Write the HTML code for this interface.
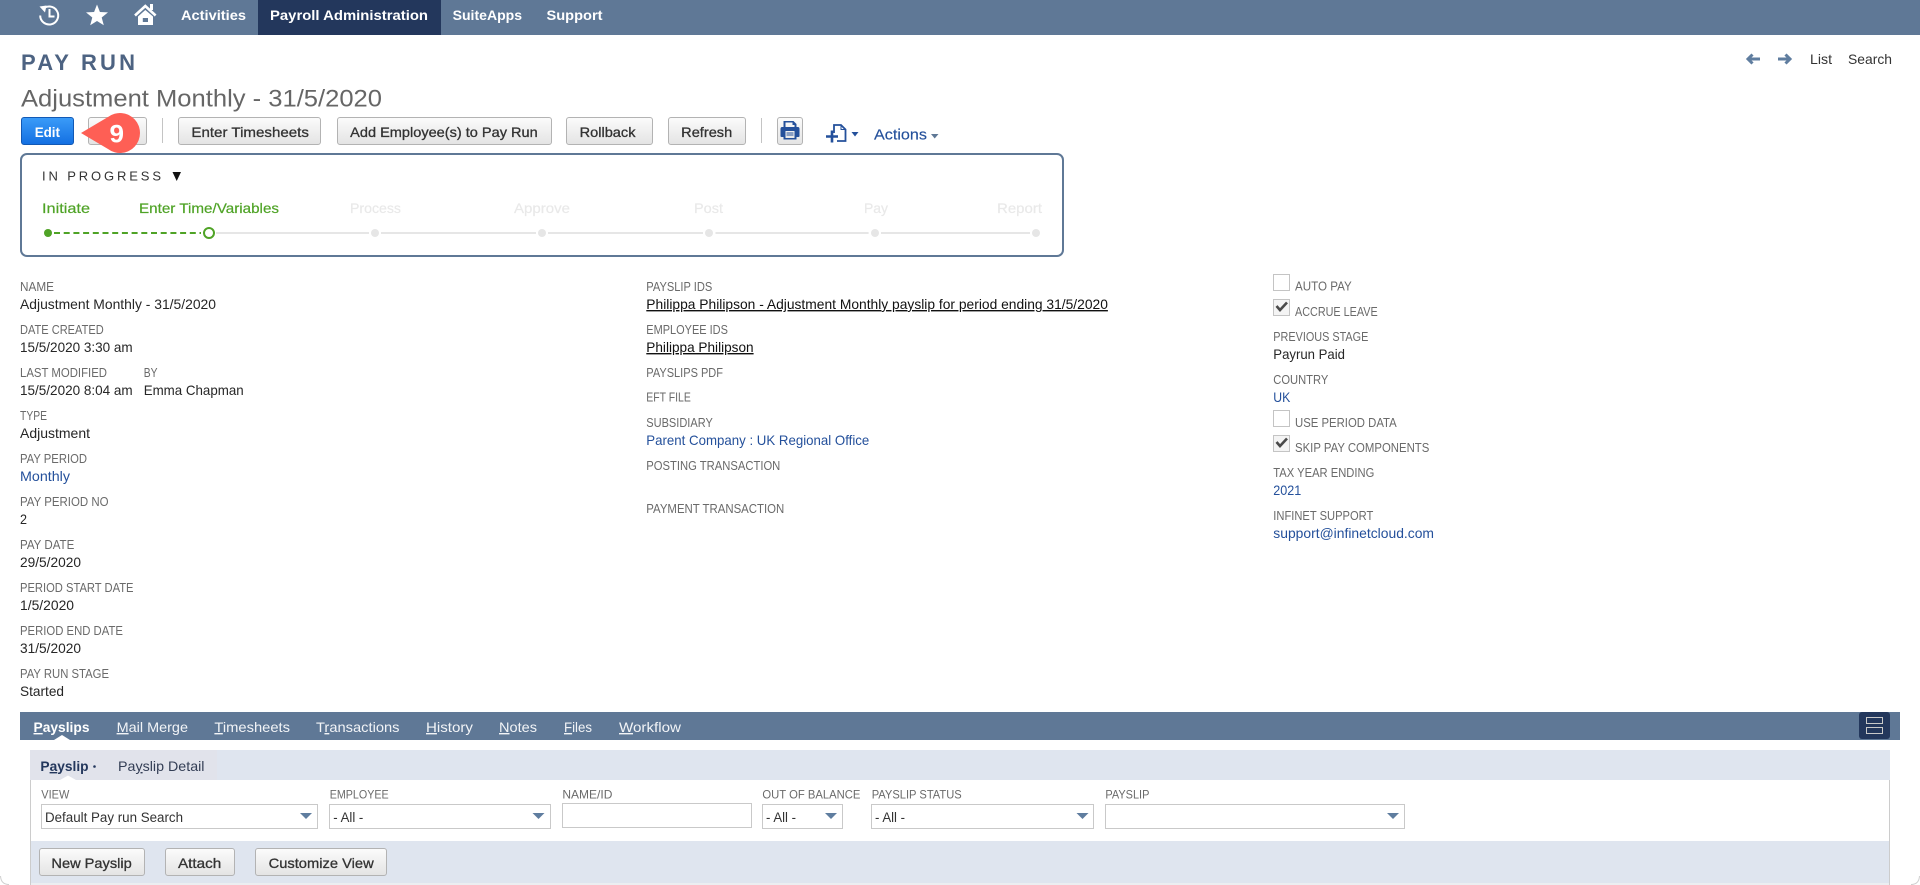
<!DOCTYPE html>
<html lang="en">
<head>
<meta charset="utf-8">
<title>Pay Run - Adjustment Monthly</title>
<style>
html,body{margin:0;padding:0;width:1920px;height:885px;overflow:hidden;background:#fff;font-family:"Liberation Sans",sans-serif}
.a{position:absolute;box-sizing:border-box}
.btn{background:linear-gradient(#fbfbfb,#e4e4e4);border:1px solid #b3b3b3;border-radius:3px}
.sel{background:#fff;border:1px solid #c9c9c9}
svg{position:absolute;left:0;top:0}
text{font-family:"Liberation Sans",sans-serif;white-space:pre}
.l{font-size:12.5px;fill:#6a6a6a}
.v{font-size:14px;fill:#262626}
.k{font-size:14px;fill:#24509b}
.n{font-size:14px;font-weight:bold;fill:#fff}
.b{font-size:14px;fill:#333;stroke:#333;stroke-width:.3px}
.s{font-size:14px;fill:#4fa326;stroke:#4fa326;stroke-width:.2px}
.g{font-size:14px;fill:#e9e9e9;stroke:#e9e9e9;stroke-width:.2px}
.t{font-size:14px;fill:#f2f4f7}
.f{font-size:12px;fill:#6a6a6a}
.o{font-size:13.5px;fill:#333}
</style>
</head>
<body>
<div class="a" style="left:0;top:0;width:1920px;height:35px;background:#5f7896"></div>
<div class="a" style="left:258px;top:0;width:183px;height:35px;background:#23375c"></div>

<div class="a" style="left:21px;top:117px;width:53px;height:28px;background:linear-gradient(#3a9bf8,#1470e2);border:1px solid #1259b5;border-radius:3px"></div>
<div class="a btn" style="left:88px;top:117px;width:59px;height:28px"></div>
<div class="a" style="left:162px;top:118px;width:1px;height:25px;background:#c4c4c4"></div>
<div class="a btn" style="left:178px;top:117px;width:143px;height:28px"></div>
<div class="a btn" style="left:337px;top:117px;width:215px;height:28px"></div>
<div class="a btn" style="left:566px;top:117px;width:87px;height:28px"></div>
<div class="a btn" style="left:668px;top:117px;width:78px;height:28px"></div>
<div class="a" style="left:761px;top:118px;width:1px;height:25px;background:#c4c4c4"></div>
<div class="a btn" style="left:777px;top:117px;width:26px;height:28px"></div>

<div class="a" style="left:20px;top:153px;width:1044px;height:104px;border:2px solid #5f7896;border-radius:7px;background:#fff"></div>

<div class="a" style="left:20px;top:712px;width:1880px;height:28px;background:#5f7896"></div>
<div class="a" style="left:1859px;top:712px;width:31px;height:27px;background:#23375c;border-radius:3px"></div>
<div class="a" style="left:1866px;top:717px;width:17px;height:7px;border:1px solid #c9c9c9"></div>
<div class="a" style="left:1866px;top:727px;width:17px;height:7px;border:1px solid #c9c9c9"></div>

<div class="a" style="left:30px;top:750px;width:1860px;height:30px;background:#dfe5ef"></div>
<div class="a" style="left:30px;top:750px;width:187px;height:30px;background:#e1e3eb"></div>
<div class="a" style="left:30px;top:780px;width:1860px;height:105px;background:#fff;border-left:1px solid #ccc;border-right:1px solid #ccc"></div>
<div class="a" style="left:31px;top:841px;width:1858px;height:42px;background:#dfe5ef"></div>
<div class="a" style="left:31px;top:883px;width:1858px;height:2px;background:#eceef1"></div>

<div class="a sel" style="left:41px;top:804px;width:277px;height:25px"></div>
<div class="a sel" style="left:329px;top:804px;width:222px;height:25px"></div>
<div class="a sel" style="left:562px;top:803px;width:190px;height:25px"></div>
<div class="a sel" style="left:762px;top:804px;width:81px;height:25px"></div>
<div class="a sel" style="left:871px;top:804px;width:223px;height:25px"></div>
<div class="a sel" style="left:1105px;top:804px;width:300px;height:25px"></div>

<div class="a btn" style="left:39px;top:848px;width:106px;height:28px"></div>
<div class="a btn" style="left:165px;top:848px;width:70px;height:28px"></div>
<div class="a btn" style="left:255px;top:848px;width:132px;height:28px"></div>

<div class="a" style="left:1273px;top:274px;width:17px;height:17px;border:1px solid #c4c4c4;background:#fff"></div>
<div class="a" style="left:1273px;top:299px;width:17px;height:17px;border:1px solid #c4c4c4;background:#f4f4f4"></div>
<div class="a" style="left:1273px;top:410px;width:17px;height:17px;border:1px solid #c4c4c4;background:#fff"></div>
<div class="a" style="left:1273px;top:435px;width:17px;height:17px;border:1px solid #c4c4c4;background:#f4f4f4"></div>

<svg width="1920" height="885" viewBox="0 0 1920 885" xmlns="http://www.w3.org/2000/svg">
<!-- nav icons -->
<path d="M42.5 9.5 A9 9 0 1 1 40.2 15.5" fill="none" stroke="#fff" stroke-width="2"/>
<path d="M39.5 6.5 L46.5 5.5 L45 12.5 Z" fill="#fff"/>
<path d="M49.5 9 V16.5 H54.5" fill="none" stroke="#fff" stroke-width="2"/>
<polygon points="97,4.5 99.9,12 108,12.4 101.7,17.5 103.8,25.3 97,21 90.2,25.3 92.3,17.5 86,12.4 94.1,12" fill="#fff"/>
<path d="M135 15.5 L145.3 6 L155.6 15.5" fill="none" stroke="#fff" stroke-width="2.6"/>
<rect x="150" y="4" width="3" height="6" fill="#fff"/>
<path fill-rule="evenodd" d="M145.3 10 L153 16.5 V25 H138 V16.5 Z M142.8 18 V22 H148 V18 Z" fill="#fff"/>
<text class="n" x="181" y="20" textLength="65" lengthAdjust="spacingAndGlyphs">Activities</text>
<text class="n" x="270" y="20" textLength="158" lengthAdjust="spacingAndGlyphs">Payroll Administration</text>
<text class="n" x="452.6" y="20" textLength="69.5" lengthAdjust="spacingAndGlyphs">SuiteApps</text>
<text class="n" x="546.5" y="20" textLength="56" lengthAdjust="spacingAndGlyphs">Support</text>

<!-- header -->
<text x="21" y="70" textLength="114" lengthAdjust="spacing" style="font-size:22px;font-weight:bold;fill:#4d6382">PAY RUN</text>
<text x="21" y="106.5" textLength="361" lengthAdjust="spacingAndGlyphs" style="font-size:24px;fill:#666">Adjustment Monthly - 31/5/2020</text>
<path d="M1760 59 H1749 M1752.5 54.5 L1748 59 L1752.5 63.5" fill="none" stroke="#5f7d9f" stroke-width="3"/>
<path d="M1778 59 H1789 M1785.5 54.5 L1790 59 L1785.5 63.5" fill="none" stroke="#5f7d9f" stroke-width="3"/>
<text class="o" x="1810" y="64" textLength="22" lengthAdjust="spacingAndGlyphs" style="font-size:14px">List</text>
<text class="o" x="1848" y="64" textLength="44" lengthAdjust="spacingAndGlyphs" style="font-size:14px">Search</text>

<!-- toolbar -->
<text x="34.7" y="137" textLength="25.3" lengthAdjust="spacingAndGlyphs" style="font-size:14px;font-weight:bold;fill:#fff">Edit</text>
<text class="b" x="191.4" y="137" textLength="117.5" lengthAdjust="spacingAndGlyphs">Enter Timesheets</text>
<text class="b" x="350.2" y="137" textLength="187.5" lengthAdjust="spacingAndGlyphs">Add Employee(s) to Pay Run</text>
<text class="b" x="579.6" y="137" textLength="55.9" lengthAdjust="spacingAndGlyphs">Rollback</text>
<text class="b" x="681.2" y="137" textLength="51" lengthAdjust="spacingAndGlyphs">Refresh</text>
<!-- printer -->
<path fill-rule="evenodd" d="M783.5 121 H793.5 L796.5 124 V127 H798 Q799.5 127 799.5 129 V136 Q799.5 137 798 137 H796.5 V139.5 H783.5 V137 H782 Q780.5 137 780.5 136 V129 Q780.5 127 782 127 H783.5 Z M785.5 122.5 V127 H794.5 V125 H792.5 V122.5 Z M785.5 131 V138 H794.5 V131 Z" fill="#24509b"/>
<path d="M786.5 133 H793.5 M786.5 135 H793.5" stroke="#24509b" stroke-width="1"/>
<!-- new doc -->
<path d="M834 133 V125 H841 L845.5 129.5 V141 H837" fill="none" stroke="#24509b" stroke-width="1.8"/>
<path d="M841 125 V129.5 H845.5" fill="none" stroke="#24509b" stroke-width="1"/>
<path d="M826 136.5 H838 M832 130.5 V142.5" stroke="#24509b" stroke-width="2.6"/>
<polygon points="851.5,132 858.5,132 855,136.5" fill="#24509b"/>
<text x="874" y="139.5" textLength="53" lengthAdjust="spacingAndGlyphs" style="font-size:15px;fill:#24509b;stroke:#24509b;stroke-width:.15px">Actions</text>
<polygon points="931,134 938.5,134 934.7,138.5" fill="#5f7896"/>

<!-- badge -->
<path d="M81 133 L108 117 A20 20 0 1 1 108 149 Z" fill="#fe5f55"/>
<text x="109.5" y="142.5" textLength="14.5" lengthAdjust="spacingAndGlyphs" style="font-size:25px;font-weight:bold;fill:#fff">9</text>

<!-- progress -->
<text x="42" y="180.5" textLength="119" lengthAdjust="spacing" style="font-size:13px;fill:#333">IN PROGRESS</text>
<polygon points="172.5,172 181,172 176.7,181" fill="#111"/>
<text class="s" x="42" y="213" textLength="48" lengthAdjust="spacingAndGlyphs">Initiate</text>
<text class="s" x="139" y="213" textLength="140" lengthAdjust="spacingAndGlyphs">Enter Time/Variables</text>
<text class="g" x="350" y="213" textLength="51" lengthAdjust="spacingAndGlyphs">Process</text>
<text class="g" x="514" y="213" textLength="56" lengthAdjust="spacingAndGlyphs">Approve</text>
<text class="g" x="694" y="213" textLength="29" lengthAdjust="spacingAndGlyphs">Post</text>
<text class="g" x="864" y="213" textLength="24" lengthAdjust="spacingAndGlyphs">Pay</text>
<text class="g" x="997" y="213" textLength="45" lengthAdjust="spacingAndGlyphs">Report</text>
<circle cx="48" cy="233" r="4" fill="#4fa326"/>
<path d="M54 233 H201" stroke="#4fa326" stroke-width="2" stroke-dasharray="6 3.7"/>
<circle cx="209" cy="233" r="5" fill="#fff" stroke="#4fa326" stroke-width="2"/>
<path d="M216 233 H369 M381 233 H536 M548 233 H703 M715.5 233 H868.6 M881 233 H1030" stroke="#e6e6e6" stroke-width="2"/>
<g fill="#e6e6e6"><circle cx="375" cy="233" r="4"/><circle cx="542" cy="233" r="4"/><circle cx="709" cy="233" r="4"/><circle cx="875" cy="233" r="4"/><circle cx="1036" cy="233" r="4"/></g>

<!-- column 1 -->
<text class="l" x="20" y="291" textLength="34" lengthAdjust="spacingAndGlyphs">NAME</text>
<text class="v" x="20" y="309" textLength="196" lengthAdjust="spacingAndGlyphs">Adjustment Monthly - 31/5/2020</text>
<text class="l" x="20" y="334" textLength="83.7" lengthAdjust="spacingAndGlyphs">DATE CREATED</text>
<text class="v" x="20" y="352" textLength="112.7" lengthAdjust="spacingAndGlyphs">15/5/2020 3:30 am</text>
<text class="l" x="20" y="377" textLength="87" lengthAdjust="spacingAndGlyphs">LAST MODIFIED</text>
<text class="l" x="143.7" y="377" textLength="13.8" lengthAdjust="spacingAndGlyphs">BY</text>
<text class="v" x="20" y="395" textLength="112.7" lengthAdjust="spacingAndGlyphs">15/5/2020 8:04 am</text>
<text class="v" x="143.7" y="395" textLength="100" lengthAdjust="spacingAndGlyphs">Emma Chapman</text>
<text class="l" x="20" y="420" textLength="27" lengthAdjust="spacingAndGlyphs">TYPE</text>
<text class="v" x="20" y="438" textLength="70" lengthAdjust="spacingAndGlyphs">Adjustment</text>
<text class="l" x="20" y="463" textLength="67" lengthAdjust="spacingAndGlyphs">PAY PERIOD</text>
<text class="k" x="20" y="481" textLength="50" lengthAdjust="spacingAndGlyphs">Monthly</text>
<text class="l" x="20" y="506" textLength="88.6" lengthAdjust="spacingAndGlyphs">PAY PERIOD NO</text>
<text class="v" x="20" y="524" textLength="7" lengthAdjust="spacingAndGlyphs">2</text>
<text class="l" x="20" y="549" textLength="54.3" lengthAdjust="spacingAndGlyphs">PAY DATE</text>
<text class="v" x="20" y="567" textLength="61" lengthAdjust="spacingAndGlyphs">29/5/2020</text>
<text class="l" x="20" y="592" textLength="113.5" lengthAdjust="spacingAndGlyphs">PERIOD START DATE</text>
<text class="v" x="20" y="610" textLength="54" lengthAdjust="spacingAndGlyphs">1/5/2020</text>
<text class="l" x="20" y="635" textLength="102.9" lengthAdjust="spacingAndGlyphs">PERIOD END DATE</text>
<text class="v" x="20" y="653" textLength="61" lengthAdjust="spacingAndGlyphs">31/5/2020</text>
<text class="l" x="20" y="678" textLength="89" lengthAdjust="spacingAndGlyphs">PAY RUN STAGE</text>
<text class="v" x="20" y="696" textLength="44" lengthAdjust="spacingAndGlyphs">Started</text>

<!-- column 2 -->
<text class="l" x="646.3" y="291" textLength="66" lengthAdjust="spacingAndGlyphs">PAYSLIP IDS</text>
<text class="v" x="646.3" y="309" textLength="461.6" lengthAdjust="spacingAndGlyphs" style="fill:#111;text-decoration:underline">Philippa Philipson - Adjustment Monthly payslip for period ending 31/5/2020</text>
<text class="l" x="646.3" y="334" textLength="81.6" lengthAdjust="spacingAndGlyphs">EMPLOYEE IDS</text>
<text class="v" x="646.3" y="352" textLength="107.3" lengthAdjust="spacingAndGlyphs" style="fill:#111;text-decoration:underline">Philippa Philipson</text>
<text class="l" x="646.3" y="377" textLength="76.7" lengthAdjust="spacingAndGlyphs">PAYSLIPS PDF</text>
<text class="l" x="646.3" y="401.5" textLength="44.5" lengthAdjust="spacingAndGlyphs">EFT FILE</text>
<text class="l" x="646.3" y="427" textLength="66.5" lengthAdjust="spacingAndGlyphs">SUBSIDIARY</text>
<text class="k" x="646.3" y="445" textLength="223" lengthAdjust="spacingAndGlyphs">Parent Company : UK Regional Office</text>
<text class="l" x="646.3" y="470" textLength="134" lengthAdjust="spacingAndGlyphs">POSTING TRANSACTION</text>
<text class="l" x="646.3" y="513" textLength="138" lengthAdjust="spacingAndGlyphs">PAYMENT TRANSACTION</text>

<!-- column 3 -->
<text class="l" x="1295" y="290.5" textLength="56.7" lengthAdjust="spacingAndGlyphs">AUTO PAY</text>
<path d="M1276.5 306 L1280 310 L1287 302.5" fill="none" stroke="#4a4a4a" stroke-width="2.6"/>
<text class="l" x="1295" y="316" textLength="82.7" lengthAdjust="spacingAndGlyphs">ACCRUE LEAVE</text>
<text class="l" x="1273.3" y="341" textLength="95" lengthAdjust="spacingAndGlyphs">PREVIOUS STAGE</text>
<text class="v" x="1273.3" y="359" textLength="71.7" lengthAdjust="spacingAndGlyphs">Payrun Paid</text>
<text class="l" x="1273.3" y="384" textLength="55" lengthAdjust="spacingAndGlyphs">COUNTRY</text>
<text class="k" x="1273.3" y="402" textLength="17" lengthAdjust="spacingAndGlyphs">UK</text>
<text class="l" x="1295" y="427" textLength="101.7" lengthAdjust="spacingAndGlyphs">USE PERIOD DATA</text>
<path d="M1276.5 442 L1280 446 L1287 438.5" fill="none" stroke="#4a4a4a" stroke-width="2.6"/>
<text class="l" x="1295" y="452" textLength="134.3" lengthAdjust="spacingAndGlyphs">SKIP PAY COMPONENTS</text>
<text class="l" x="1273.3" y="477" textLength="101" lengthAdjust="spacingAndGlyphs">TAX YEAR ENDING</text>
<text class="k" x="1273.3" y="495" textLength="28" lengthAdjust="spacingAndGlyphs">2021</text>
<text class="l" x="1273.3" y="520" textLength="100" lengthAdjust="spacingAndGlyphs">INFINET SUPPORT</text>
<text class="k" x="1273.3" y="538" textLength="160.7" lengthAdjust="spacingAndGlyphs">support@infinetcloud.com</text>

<!-- tabs -->
<text class="t" x="33.5" y="732" textLength="56" lengthAdjust="spacingAndGlyphs" style="font-weight:bold;fill:#fff"><tspan text-decoration="underline">P</tspan>ayslips</text>
<text class="t" x="116.6" y="732" textLength="71.4" lengthAdjust="spacingAndGlyphs"><tspan text-decoration="underline">M</tspan>ail Merge</text>
<text class="t" x="214.4" y="732" textLength="75.6" lengthAdjust="spacingAndGlyphs"><tspan text-decoration="underline">T</tspan>imesheets</text>
<text class="t" x="316" y="732" textLength="83.5" lengthAdjust="spacingAndGlyphs">T<tspan text-decoration="underline">r</tspan>ansactions</text>
<text class="t" x="426" y="732" textLength="47" lengthAdjust="spacingAndGlyphs"><tspan text-decoration="underline">H</tspan>istory</text>
<text class="t" x="499" y="732" textLength="38" lengthAdjust="spacingAndGlyphs"><tspan text-decoration="underline">N</tspan>otes</text>
<text class="t" x="564" y="732" textLength="28" lengthAdjust="spacingAndGlyphs"><tspan text-decoration="underline">F</tspan>iles</text>
<text class="t" x="619" y="732" textLength="62" lengthAdjust="spacingAndGlyphs"><tspan text-decoration="underline">W</tspan>orkflow</text>
<polygon points="54,740 62,735 70,740" fill="#fff"/>

<!-- subtabs -->
<text x="40.4" y="771" textLength="48.2" lengthAdjust="spacingAndGlyphs" style="font-size:14px;font-weight:bold;fill:#23375c">P<tspan text-decoration="underline">a</tspan>yslip</text>
<circle cx="94.5" cy="766.5" r="1.3" fill="#23375c"/>
<text x="118" y="771" textLength="86.5" lengthAdjust="spacingAndGlyphs" style="font-size:14px;fill:#333e55">Pa<tspan text-decoration="underline">y</tspan>slip Detail</text>
<polygon points="60,780 68,775.5 76,780" fill="#fff"/>

<!-- filters -->
<text class="f" x="41.3" y="798.5" textLength="28" lengthAdjust="spacingAndGlyphs">VIEW</text>
<text class="f" x="329.7" y="798.5" textLength="59" lengthAdjust="spacingAndGlyphs">EMPLOYEE</text>
<text class="f" x="562.4" y="798.5" textLength="50" lengthAdjust="spacingAndGlyphs">NAME/ID</text>
<text class="f" x="762.4" y="798.5" textLength="98" lengthAdjust="spacingAndGlyphs">OUT OF BALANCE</text>
<text class="f" x="871.7" y="798.5" textLength="90" lengthAdjust="spacingAndGlyphs">PAYSLIP STATUS</text>
<text class="f" x="1105.4" y="798.5" textLength="44" lengthAdjust="spacingAndGlyphs">PAYSLIP</text>
<text class="o" x="45" y="822" textLength="138" lengthAdjust="spacingAndGlyphs">Default Pay run Search</text>
<text class="o" x="333.3" y="822" textLength="30" lengthAdjust="spacingAndGlyphs">- All -</text>
<text class="o" x="766" y="822" textLength="30" lengthAdjust="spacingAndGlyphs">- All -</text>
<text class="o" x="875" y="822" textLength="30" lengthAdjust="spacingAndGlyphs">- All -</text>
<g fill="#5f7d9f">
<polygon points="300,813 312,813 306,819"/>
<polygon points="532.5,813 544.5,813 538.5,819"/>
<polygon points="825,813 837,813 831,819"/>
<polygon points="1076.5,813 1088.5,813 1082.5,819"/>
<polygon points="1387,813 1399,813 1393,819"/>
</g>
<text class="b" x="51.4" y="868" textLength="80.4" lengthAdjust="spacingAndGlyphs">New Payslip</text>
<text class="b" x="178" y="868" textLength="43.3" lengthAdjust="spacingAndGlyphs">Attach</text>
<text class="b" x="268.6" y="868" textLength="105.1" lengthAdjust="spacingAndGlyphs">Customize View</text>

<!-- window corners -->
<path d="M0.5 876 Q1 884.5 9 884.5" fill="none" stroke="#cfcfcf"/>
<path d="M1919.5 876 Q1919 884.5 1911 884.5" fill="none" stroke="#cfcfcf"/>
</svg>
</body>
</html>
